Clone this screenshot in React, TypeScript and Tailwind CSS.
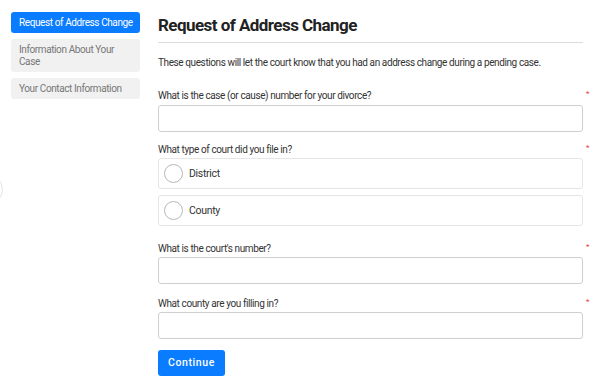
import { useState } from 'react'

const steps = [
  { id: 'address', label: 'Request of Address Change' },
  { id: 'case', label: 'Information About Your Case' },
  { id: 'contact', label: 'Your Contact Information' },
]

function Label({ text }: { text: string }) {
  return (
    <div className="flex justify-between items-start text-[10px] leading-[14px] text-[#333] tracking-[-0.4px]">
      <span>{text}</span>
      <span className="text-[#e53935] text-[8px] leading-[10px] mr-[-4px] translate-x-[2px]">*</span>
    </div>
  )
}

function RadioOption({ label, checked, onClick }: { label: string; checked: boolean; onClick: () => void }) {
  return (
    <button
      onClick={onClick}
      className="flex items-center gap-[6px] h-[31px] px-[5px] border border-[#e6e6e6] rounded-[3px] text-[10.5px] tracking-[-0.3px] text-[#333] text-left w-full"
    >
      <span className="w-[19px] h-[19px] rounded-full border border-[#b8b8b8] flex items-center justify-center">
        {checked && <span className="w-[9px] h-[9px] rounded-full bg-[#0a7cff]" />}
      </span>
      {label}
    </button>
  )
}

export default function App() {
  const [active] = useState('address')
  const [court, setCourt] = useState('')

  return (
    <div className="relative w-[598px] h-[386px] bg-white overflow-hidden flex gap-[18px] pl-[11px] pt-[12px]" style={{ fontFamily: 'Roboto, "Noto Sans", sans-serif' }}>
      <div className="absolute left-[-28px] top-[174px] w-[31px] h-[31px] rounded-full border border-[#e4e4e4]" />

      {/* Steps */}
      <div className="w-[129px] flex flex-col gap-[6px]">
        {steps.map((s) => (
          <div
            key={s.id}
            className={`rounded-[3px] px-[8px] py-[4.5px] text-[10px] leading-[12px] tracking-[-0.4px] ${
              s.id === active ? 'bg-[#0a7cff] text-white whitespace-nowrap' : 'bg-[#f1f1f1] text-[#777]'
            }`}
          >
            {s.label}
          </div>
        ))}
      </div>

      {/* Form */}
      <div className="w-[425px] flex flex-col">
        <h1 className="text-[17px] leading-[22px] font-bold text-[#222] mt-[2px] tracking-[-0.55px]">Request of Address Change</h1>
        <div className="h-px bg-[#dcdcdc] mt-[6px]" />
        <p className="text-[10px] leading-[14px] text-[#333] mt-[13px] tracking-[-0.4px]">
          These questions will let the court know that you had an address change during a pending case.
        </p>

        <div className="mt-[19px]">
          <Label text="What is the case (or cause) number for your divorce?" />
          <input className="mt-[2px] w-full h-[27px] border border-[#cfcfcf] rounded-[3px] outline-none px-2 text-[11px]" />
        </div>

        <div className="mt-[11px]">
          <Label text="What type of court did you file in?" />
          <div className="mt-[1px] flex flex-col gap-[6px]">
            <RadioOption label="District" checked={court === 'district'} onClick={() => setCourt('district')} />
            <RadioOption label="County" checked={court === 'county'} onClick={() => setCourt('county')} />
          </div>
        </div>

        <div className="mt-[16px]">
          <Label text="What is the court's number?" />
          <input className="mt-[1px] w-full h-[27px] border border-[#cfcfcf] rounded-[3px] outline-none px-2 text-[11px]" />
        </div>

        <div className="mt-[13px]">
          <Label text="What county are you filling in?" />
          <input className="mt-[1px] w-full h-[27px] border border-[#cfcfcf] rounded-[3px] outline-none px-2 text-[11px]" />
        </div>

        <button className="mt-[11px] self-start w-[67px] h-[26px] rounded-[3px] bg-[#0a7cff] text-white text-[10.5px] font-medium tracking-[0.6px]">
          Continue
        </button>
      </div>
    </div>
  )
}
